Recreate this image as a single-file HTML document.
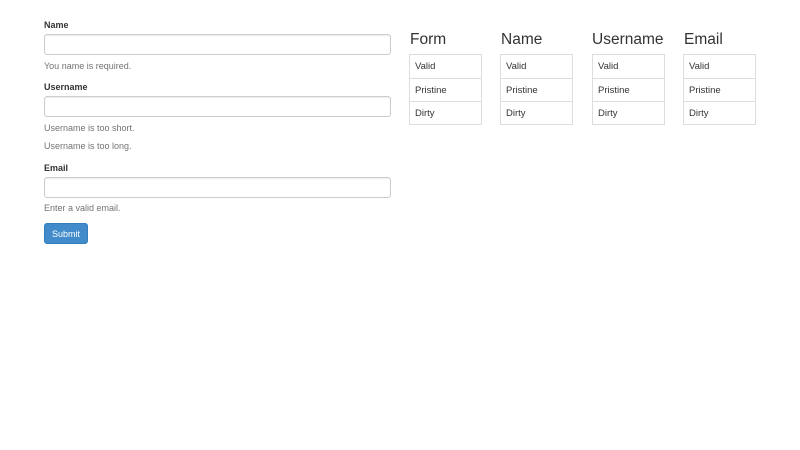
<!DOCTYPE html>
<html><head><style>
*{box-sizing:border-box;margin:0;padding:0}
body{width:800px;height:450px;background:#fff;font-family:"Liberation Sans",sans-serif;color:#333;position:relative;overflow:hidden}
.a{position:absolute}
.lbl{font-size:9px;font-weight:bold;color:#333}
.inp{width:347px;height:21px;border:1px solid #ccc;border-radius:3px;box-shadow:inset 0 1px 1px rgba(0,0,0,.075)}
.help{font-size:9px;color:#737373}
.btn{background:#428bca;border:1px solid #357ebd;border-radius:3px;color:#fff;font-size:9px;width:44px;height:21px;line-height:21px;text-align:center}
h3{font-size:15.5px;font-weight:normal;color:#333}
.tb{width:73px;border:1px solid #ddd}
.tb div{height:23px;line-height:24px;font-size:9.5px;padding-left:5px;border-top:1px solid #ddd}
.tb div:first-child{border-top:none}
</style></head><body>
<div class="a lbl" style="left:44px;top:20px">Name</div>
<div class="a inp" style="left:44px;top:34px"></div>
<div class="a help" style="left:44px;top:61px">You name is required.</div>
<div class="a lbl" style="left:44px;top:82px">Username</div>
<div class="a inp" style="left:44px;top:96px"></div>
<div class="a help" style="left:44px;top:123px">Username is too short.</div>
<div class="a help" style="left:44px;top:141px">Username is too long.</div>
<div class="a lbl" style="left:44px;top:163px">Email</div>
<div class="a inp" style="left:44px;top:177px"></div>
<div class="a help" style="left:44px;top:203px">Enter a valid email.</div>
<div class="a btn" style="left:44px;top:223px">Submit</div>

<h3 class="a" style="left:410px;top:31px">Form</h3>
<div class="a tb" style="left:409px;top:54px"><div>Valid</div><div>Pristine</div><div>Dirty</div></div>
<h3 class="a" style="left:501px;top:31px">Name</h3>
<div class="a tb" style="left:500px;top:54px"><div>Valid</div><div>Pristine</div><div>Dirty</div></div>
<h3 class="a" style="left:592px;top:31px">Username</h3>
<div class="a tb" style="left:592px;top:54px"><div>Valid</div><div>Pristine</div><div>Dirty</div></div>
<h3 class="a" style="left:684px;top:31px">Email</h3>
<div class="a tb" style="left:683px;top:54px"><div>Valid</div><div>Pristine</div><div>Dirty</div></div>
</body></html>
